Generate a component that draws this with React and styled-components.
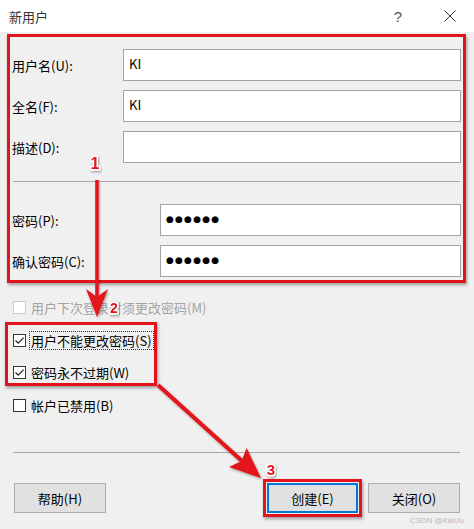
import styled, { createGlobalStyle, css } from 'styled-components'

const GlobalStyle = createGlobalStyle`
  html, body {
    margin: 0;
    padding: 0;
    background: #f0f0f0;
  }
  * {
    box-sizing: border-box;
  }
`

const RED = '#e3131b'
const FONT = `"Noto Sans CJK SC", "Noto Sans", sans-serif`

const Dialog = styled.div`
  position: relative;
  width: 474px;
  height: 529px;
  overflow: hidden;
  background: #f0f0f0;
  font-family: ${FONT};
  font-size: 13px;
  color: #000;
`

const TitleBar = styled.div`
  height: 32px;
  background: #fff;
  display: flex;
  align-items: center;
  padding: 0 18px 0 9px;
  color: #333;
`

const TitleText = styled.div`
  flex: 1;
  font-size: 13px;
`

const TitleButtons = styled.div`
  display: flex;
  align-items: center;
  gap: 42px;
`

const HelpMark = styled.span`
  font-family: "Liberation Sans", sans-serif;
  font-size: 15px;
  color: #555;
`

const RedBox = styled.div`
  border: 3px solid ${RED};
  box-shadow: 1px 2px 3px rgba(0, 0, 0, 0.35);
  ${(p) => p.$inline && css`
    display: inline-flex;
  `}
`

const FormBox = styled(RedBox)`
  margin: 2px 8px 0 7px;
  padding: 12px 2px 3px 2px;
`

const FieldGrid = styled.div`
  display: grid;
  grid-template-columns: ${(p) => p.$labelWidth}px 1fr;
  row-gap: 9px;
  align-items: center;
`

const Label = styled.label`
  font-size: 13px;
  color: #000;
`

const TextInput = styled.input`
  height: 32px;
  width: 100%;
  border: 1px solid #a3a3a3;
  background: #fff;
  padding: 0 5px 4px;
  font-family: ${FONT};
  font-size: 13px;
  color: #000;
  outline: none;
`

const PasswordInput = styled(TextInput)`
  font-family: "DejaVu Sans", sans-serif;
  font-size: 9px;
  letter-spacing: 1.2px;
  padding: 0 5px 3px;
`

const Divider = styled.div`
  height: 1px;
  background: #a8a8a8;
  margin: ${(p) => p.$margin};
`

const CheckRow = styled.div`
  display: flex;
  align-items: center;
  height: 20px;
  margin: ${(p) => p.$margin || '0'};
  color: ${(p) => (p.$disabled ? '#a3a3a3' : '#000')};
`

const Box = styled.span`
  width: 13px;
  height: 13px;
  flex: none;
  border: 1px solid ${(p) => (p.$disabled ? '#cccccc' : '#333')};
  background: #fff;
  margin-right: 5px;
  display: flex;
  align-items: center;
  justify-content: center;
`

const CheckText = styled.span`
  padding: 0 1px;
  border: 1px dotted ${(p) => (p.$focused ? '#333' : 'transparent')};
  line-height: 17px;
  margin-left: -2px;
`

const CheckGroup = styled(RedBox)`
  width: 152px;
  margin: 5px 0 0 5px;
  padding: 5px 0 1px 5px;
  display: flex;
  flex-direction: column;
  gap: 12px;
`

const ButtonRow = styled.div`
  display: flex;
  align-items: center;
  margin: 26px 14px 0 14px;
`

const Spacer = styled.div`
  flex: 1;
`

const Button = styled.button`
  width: ${(p) => p.$width || 92}px;
  height: 30px;
  border: 1px solid ${(p) => (p.$primary ? '#0078d7' : '#adadad')};
  box-shadow: ${(p) => (p.$primary ? 'inset 0 0 0 1px #0078d7' : 'none')};
  background: #e1e1e1;
  font-family: ${FONT};
  font-size: 13px;
  color: #000;
  padding: 0;
  cursor: pointer;
`

const CreateBox = styled(RedBox)`
  padding: 1px;
  margin-right: 6px;
  display: flex;
`

const Overlay = styled.svg`
  position: absolute;
  top: 0;
  left: 0;
  pointer-events: none;
`

const Watermark = styled.div`
  position: absolute;
  right: 10px;
  bottom: 4px;
  font-family: "Liberation Sans", sans-serif;
  font-size: 8px;
  color: #b8b8b8;
`

function Checkbox({ checked, disabled, focused, margin, children }) {
  return (
    <CheckRow $disabled={disabled} $margin={margin}>
      <Box $disabled={disabled}>
        {checked && (
          <svg width="11" height="11" viewBox="0 0 11 11">
            <path d="M1.5 5.5 L4.2 8.2 L9.6 2.6" fill="none" stroke="#222" strokeWidth="1.2" />
          </svg>
        )}
      </Box>
      <CheckText $focused={focused}>{children}</CheckText>
    </CheckRow>
  )
}

const StepLabel = ({ x, y, size, children }) => (
  <text
    x={x}
    y={y}
    textAnchor="middle"
    fontFamily="Liberation Sans, sans-serif"
    fontWeight="bold"
    fontSize={size}
    fill={RED}
    stroke="#fff"
    strokeWidth="3"
    paintOrder="stroke"
    filter="url(#shadow)"
  >
    {children}
  </text>
)

function Annotations() {
  return (
    <Overlay width="474" height="529" viewBox="0 0 474 529">
      <defs>
        <filter id="shadow" x="-20%" y="-20%" width="140%" height="140%">
          <feDropShadow dx="1" dy="1.5" stdDeviation="1.2" floodColor="#000" floodOpacity="0.35" />
        </filter>
      </defs>
      <g filter="url(#shadow)" fill={RED} stroke={RED}>
        <line x1="97" y1="180" x2="97" y2="298" strokeWidth="3.5" />
        <polygon points="86,289 97,297 108,289 97,317" stroke="none" />
        <line x1="158" y1="385" x2="242" y2="461" strokeWidth="4" />
        <polygon points="229,467 241.5,461 246.6,448 261,478" stroke="none" />
      </g>
      <StepLabel x="95" y="169" size="16">1</StepLabel>
      <StepLabel x="114" y="313" size="14">2</StepLabel>
      <StepLabel x="271" y="475" size="15">3</StepLabel>
    </Overlay>
  )
}

export default function App() {
  return (
    <Dialog>
      <GlobalStyle />
      <TitleBar>
        <TitleText>新用户</TitleText>
        <TitleButtons>
          <HelpMark>?</HelpMark>
          <svg width="12" height="12" viewBox="0 0 12 12">
            <path d="M0.5 0.5 L11.5 11.5 M11.5 0.5 L0.5 11.5" stroke="#333" strokeWidth="1" />
          </svg>
        </TitleButtons>
      </TitleBar>

      <FormBox>
        <FieldGrid $labelWidth={111}>
          <Label>用户名(U):</Label>
          <TextInput readOnly value="KI" />
          <Label>全名(F):</Label>
          <TextInput readOnly value="KI" />
          <Label>描述(D):</Label>
          <TextInput readOnly value="" />
        </FieldGrid>
        <Divider $margin="18px 1px 22px 1px" />
        <FieldGrid $labelWidth={148}>
          <Label>密码(P):</Label>
          <PasswordInput readOnly value="●●●●●●" />
          <Label>确认密码(C):</Label>
          <PasswordInput readOnly value="●●●●●●" />
        </FieldGrid>
      </FormBox>

      <Checkbox disabled margin="14px 0 0 13px">用户下次登录时须更改密码(M)</Checkbox>

      <CheckGroup>
        <Checkbox checked focused>用户不能更改密码(S)</Checkbox>
        <Checkbox checked>密码永不过期(W)</Checkbox>
      </CheckGroup>

      <Checkbox margin="9px 0 0 13px">帐户已禁用(B)</Checkbox>

      <Divider $margin="37px 14px 0 13px" />

      <ButtonRow>
        <Button>帮助(H)</Button>
        <Spacer />
        <CreateBox>
          <Button $primary $width={91}>创建(E)</Button>
        </CreateBox>
        <Button>关闭(O)</Button>
      </ButtonRow>

      <Annotations />
      <Watermark>CSDN @KikiJu</Watermark>
    </Dialog>
  )
}
